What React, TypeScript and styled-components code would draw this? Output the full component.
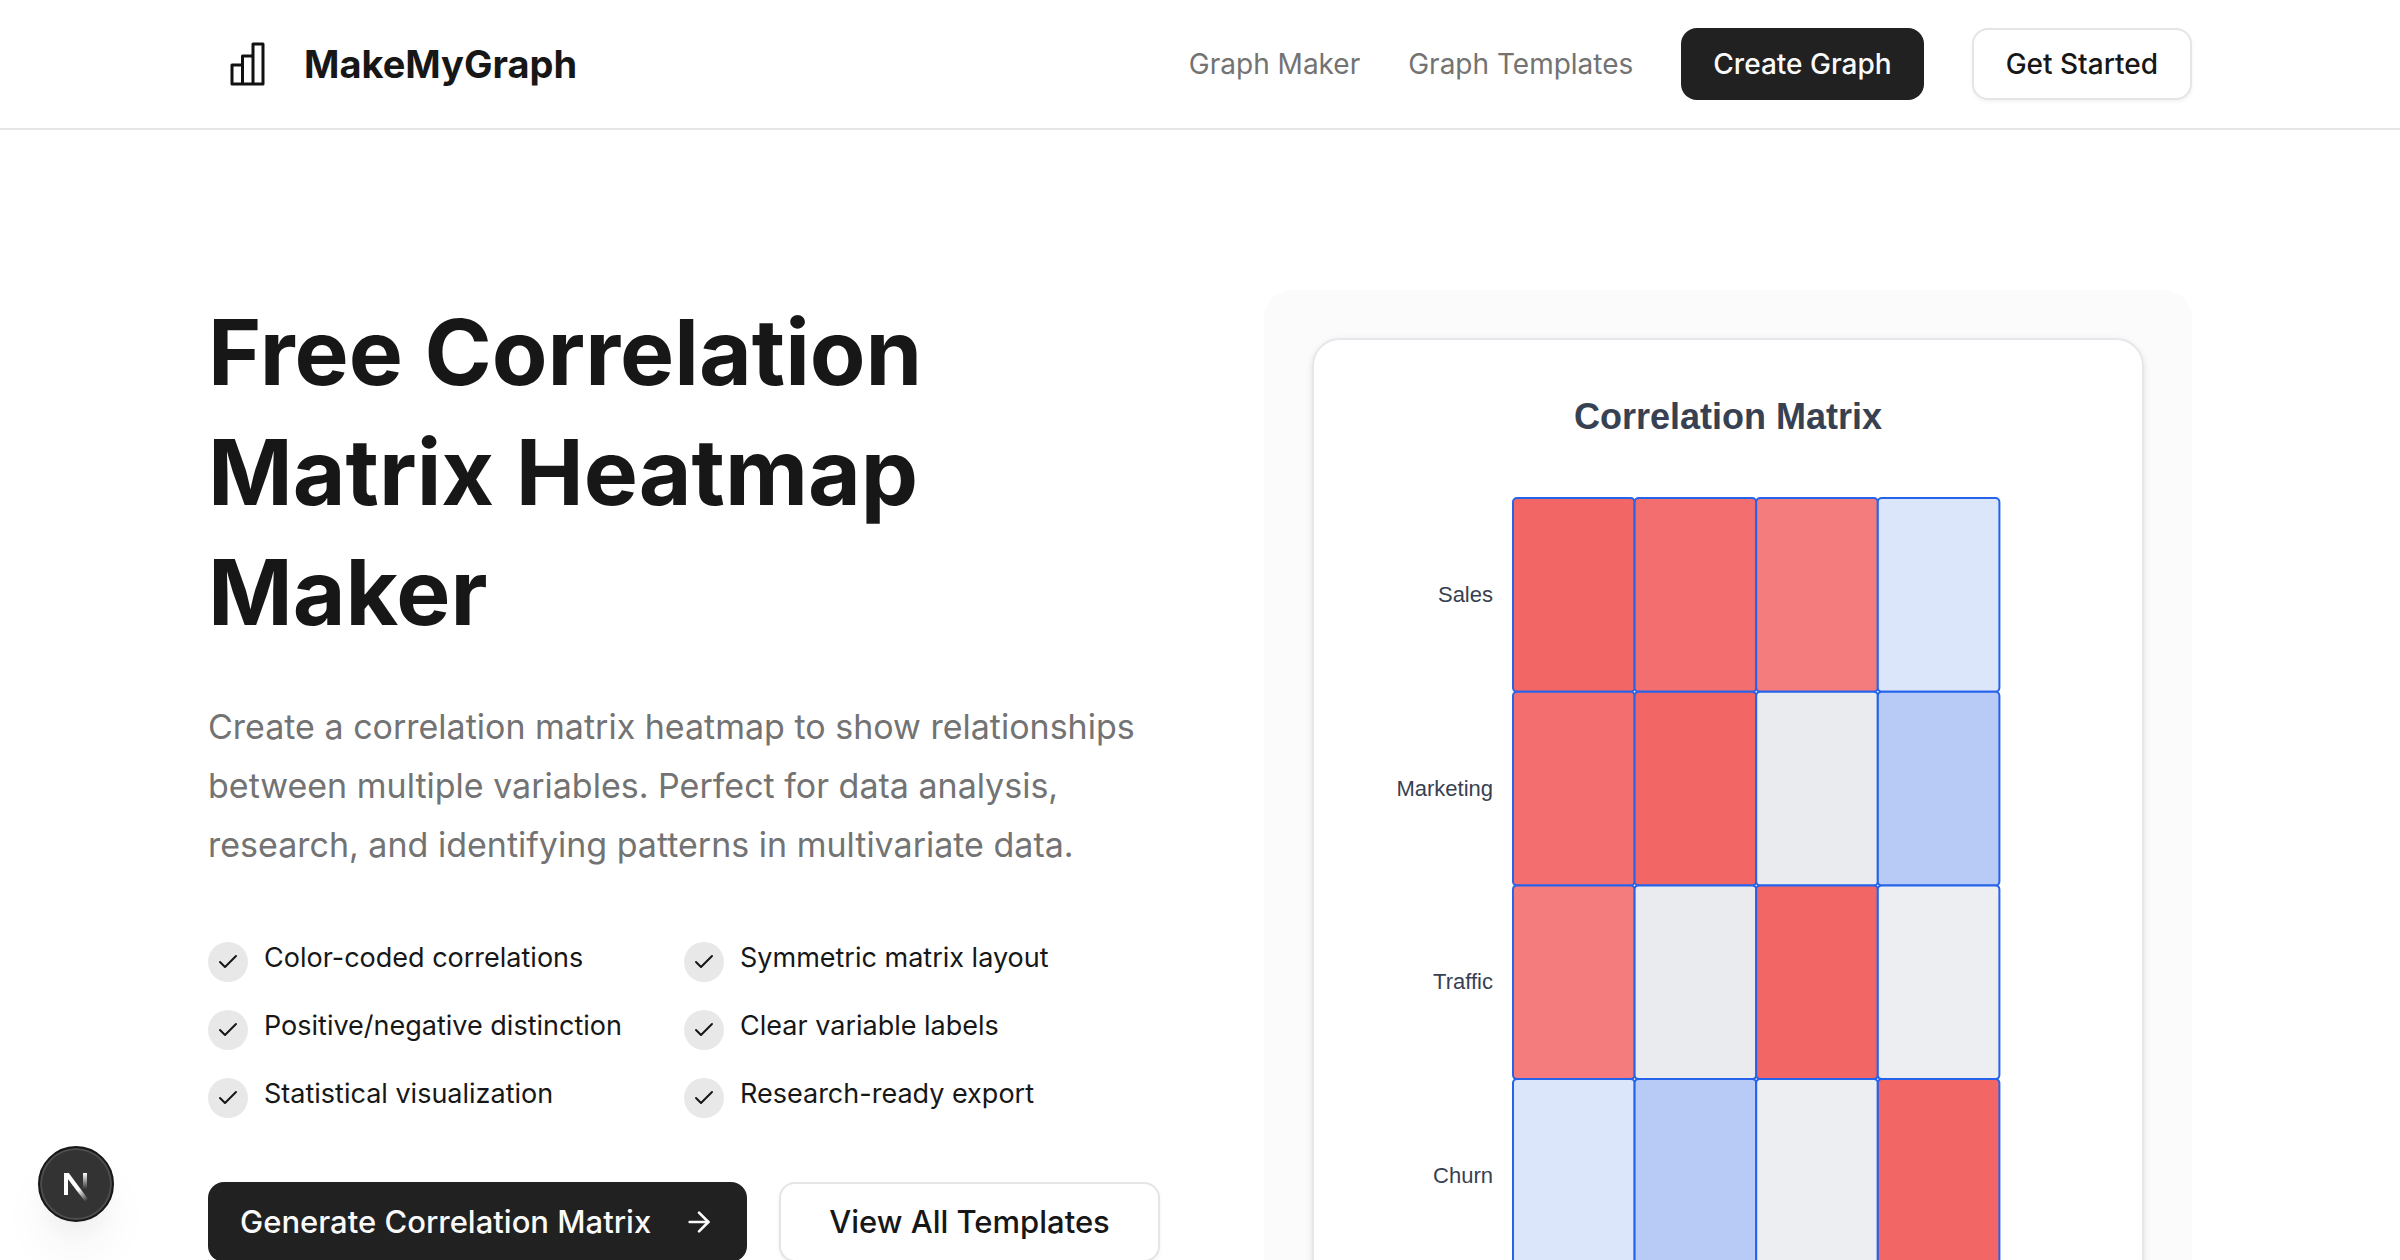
import React from "react";
import styled, { createGlobalStyle, css } from "styled-components";
import { ArrowRight, Check } from "lucide-react";

const GlobalStyle = createGlobalStyle`
  *, *::before, *::after { box-sizing: border-box; }
  body {
    margin: 0;
    background: #ffffff;
    color: #171717;
    font-family: Inter, "Liberation Sans", sans-serif;
    -webkit-font-smoothing: antialiased;
  }
  h1, p, ul { margin: 0; padding: 0; }
`;

const Container = styled.div`
  width: 100%;
  max-width: 2048px;
  margin: 0 auto;
  padding: 0 32px;
`;

const Header = styled.header`
  border-bottom: 2px solid #e5e5e5;
  background: #ffffff;
`;

const HeaderRow = styled(Container)`
  display: flex;
  align-items: center;
  justify-content: space-between;
  padding-top: 28px;
  padding-bottom: 28px;
`;

const Brand = styled.a`
  display: flex;
  align-items: center;
  gap: 16px;
  color: inherit;
  text-decoration: none;
  font-size: 38px;
  line-height: 56px;
  font-weight: 700;
`;

const LogoMark = styled.svg`
  width: 80px;
  height: 64px;
`;

const Nav = styled.nav`
  display: flex;
  align-items: center;
  gap: 48px;
`;

const NavLink = styled.a`
  color: #737373;
  font-size: 28px;
  line-height: 40px;
  text-decoration: none;
`;

const Button = styled.button<{ $variant: "solid" | "outline"; $size?: "md" | "lg" }>`
  display: inline-flex;
  align-items: center;
  justify-content: center;
  gap: 32px;
  flex-shrink: 0;
  border-radius: 16px;
  font-family: inherit;
  font-weight: 500;
  white-space: nowrap;
  cursor: pointer;
  ${({ $size, $variant }) =>
    $size === "lg"
      ? css`
          height: 80px;
          padding: 0 ${$variant === "solid" ? 32 : 48}px;
          font-size: 31px;
          line-height: 48px;
        `
      : css`
          height: 72px;
          padding: 0 32px;
          font-size: 28px;
          line-height: 40px;
        `}
  ${({ $variant }) =>
    $variant === "solid"
      ? css`
          border: 0;
          background: #212121;
          color: #fafafa;
        `
      : css`
          border: 2px solid #e5e5e5;
          background: #ffffff;
          color: #171717;
          box-shadow: 0 2px 4px rgba(0, 0, 0, 0.05);
        `}
`;

const Hero = styled(Container)`
  display: grid;
  grid-template-columns: minmax(0, 944fr) minmax(0, 928fr);
  gap: 112px;
  align-items: start;
  padding-top: 160px;
  padding-bottom: 160px;
`;

const Title = styled.h1`
  padding-top: 2px;
  font-size: 91px;
  line-height: 120px;
  font-weight: 700;
`;

const Lead = styled.p`
  margin-top: 45px;
  color: #737373;
  font-size: 34px;
  line-height: 59px;
`;

const FeatureList = styled.ul`
  display: grid;
  grid-template-columns: repeat(2, minmax(0, 1fr));
  gap: 24px;
  max-width: 928px;
  margin-top: 64px;
  list-style: none;
`;

const Feature = styled.li`
  display: flex;
  align-items: flex-start;
  gap: 16px;
  font-size: 27px;
  line-height: 40px;
  white-space: nowrap;
`;

const Tick = styled.span`
  display: flex;
  align-items: center;
  justify-content: center;
  flex-shrink: 0;
  width: 40px;
  height: 40px;
  margin-top: 4px;
  border-radius: 50%;
  background: #e8e8e8;
`;

const Actions = styled.div`
  display: flex;
  gap: 32px;
  margin-top: 64px;
`;

const Preview = styled.section`
  padding: 48px;
  border-radius: 28px;
  background: #fbfbfb;
`;

const ChartCard = styled.div`
  border: 2px solid #e5e7eb;
  border-radius: 28px;
  background: #ffffff;
  box-shadow: 0 2px 6px rgba(0, 0, 0, 0.1);
`;

const Chart = styled.svg`
  display: block;
  width: 100%;
  height: auto;
  font-family: "Liberation Sans", Arial, sans-serif;
  fill: #374151;
`;

const DevBadge = styled.button`
  position: fixed;
  left: 38px;
  bottom: 38px;
  display: flex;
  align-items: center;
  justify-content: center;
  width: 76px;
  height: 76px;
  padding: 0;
  border: 2px solid #171717;
  border-radius: 50%;
  background: #333333;
  box-shadow: inset 0 0 0 2px #4d4d4d, 0 16px 32px -8px rgba(0, 0, 0, 0.06), 0 32px 48px rgba(0, 0, 0, 0.04);
`;

const FEATURES = [
  "Color-coded correlations",
  "Symmetric matrix layout",
  "Positive/negative distinction",
  "Clear variable labels",
  "Statistical visualization",
  "Research-ready export",
];

const FILL = {
  full: "#f26666",
  strong: "#f36f6f",
  medium: "#f47c7c",
  none: "#e9ebee",
  faint: "#edeef2",
  cool: "#dce6fb",
  cooler: "#b8cbf7",
};

const MATRIX: { label: string; cells: (keyof typeof FILL)[] }[] = [
  { label: "Sales", cells: ["full", "strong", "medium", "cool"] },
  { label: "Marketing", cells: ["strong", "full", "none", "cooler"] },
  { label: "Traffic", cells: ["medium", "none", "full", "faint"] },
  { label: "Churn", cells: ["cool", "cooler", "faint", "full"] },
];

const CELL_W = 121.6;
const CELL_H = 193.7;
const GRID_X = 199;
const GRID_Y = 158;

function CorrelationChart() {
  return (
    <Chart viewBox="0 0 828 1020" role="img" aria-label="Correlation Matrix">
      <text x="414" y="89" fontSize="36" fontWeight="700" textAnchor="middle">
        Correlation Matrix
      </text>
      {MATRIX.map((row, r) => (
        <g key={row.label}>
          <text x="179" y={Math.round(GRID_Y + CELL_H * (r + 0.5) + 7)} fontSize="22" textAnchor="end">
            {row.label}
          </text>
          {row.cells.map((cell, c) => (
            <rect
              key={c}
              x={GRID_X + CELL_W * c}
              y={GRID_Y + CELL_H * r}
              width={CELL_W}
              height={CELL_H}
              rx="4"
              fill={FILL[cell]}
              stroke="#2563eb"
              strokeWidth="2"
            />
          ))}
        </g>
      ))}
    </Chart>
  );
}

export default function App() {
  return (
    <>
      <GlobalStyle />
      <Header>
        <HeaderRow>
          <Brand href="#">
            <LogoMark viewBox="0 0 80 64" fill="none" stroke="#111111" strokeWidth="3" strokeLinejoin="round" aria-hidden="true">
              <path d="M24 33h10.500v19H24zM34.500 24H45v28H34.500zM45 12h10v40H45z" />
            </LogoMark>
            MakeMyGraph
          </Brand>
          <Nav>
            <NavLink href="#">Graph Maker</NavLink>
            <NavLink href="#">Graph Templates</NavLink>
            <Button $variant="solid">Create Graph</Button>
            <Button $variant="outline">Get Started</Button>
          </Nav>
        </HeaderRow>
      </Header>
      <main>
        <Hero>
          <div>
            <Title>Free Correlation Matrix Heatmap Maker</Title>
            <Lead>
              Create a correlation matrix heatmap to show relationships between multiple variables. Perfect for data
              analysis, research, and identifying patterns in multivariate data.
            </Lead>
            <FeatureList>
              {FEATURES.map((text) => (
                <Feature key={text}>
                  <Tick>
                    <Check size={24} strokeWidth={2} />
                  </Tick>
                  {text}
                </Feature>
              ))}
            </FeatureList>
            <Actions>
              <Button $variant="solid" $size="lg">
                Generate Correlation Matrix
                <ArrowRight size={32} />
              </Button>
              <Button $variant="outline" $size="lg">
                View All Templates
              </Button>
            </Actions>
          </div>
          <Preview>
            <ChartCard>
              <CorrelationChart />
            </ChartCard>
          </Preview>
        </Hero>
      </main>
      <DevBadge type="button" aria-label="Open developer tools">
        <svg width="40" height="40" viewBox="0 0 40 40" fill="none" aria-hidden="true">
          <defs>
            <linearGradient id="diagonal" gradientUnits="userSpaceOnUse" x1="22" y1="26" x2="31" y2="37">
              <stop stopColor="#ffffff" />
              <stop offset="1" stopColor="#ffffff" stopOpacity="0" />
            </linearGradient>
            <linearGradient id="stem" gradientUnits="userSpaceOnUse" x1="29" y1="9" x2="29" y2="25">
              <stop stopColor="#ffffff" />
              <stop offset="1" stopColor="#ffffff" stopOpacity="0" />
            </linearGradient>
          </defs>
          <path d="M8 9h4v22H8z" fill="#ffffff" />
          <path d="M8 9h4.800L32 35l-3 2.600L8 10z" fill="url(#diagonal)" />
          <path d="M27 9h4v16h-4z" fill="url(#stem)" />
        </svg>
      </DevBadge>
    </>
  );
}
